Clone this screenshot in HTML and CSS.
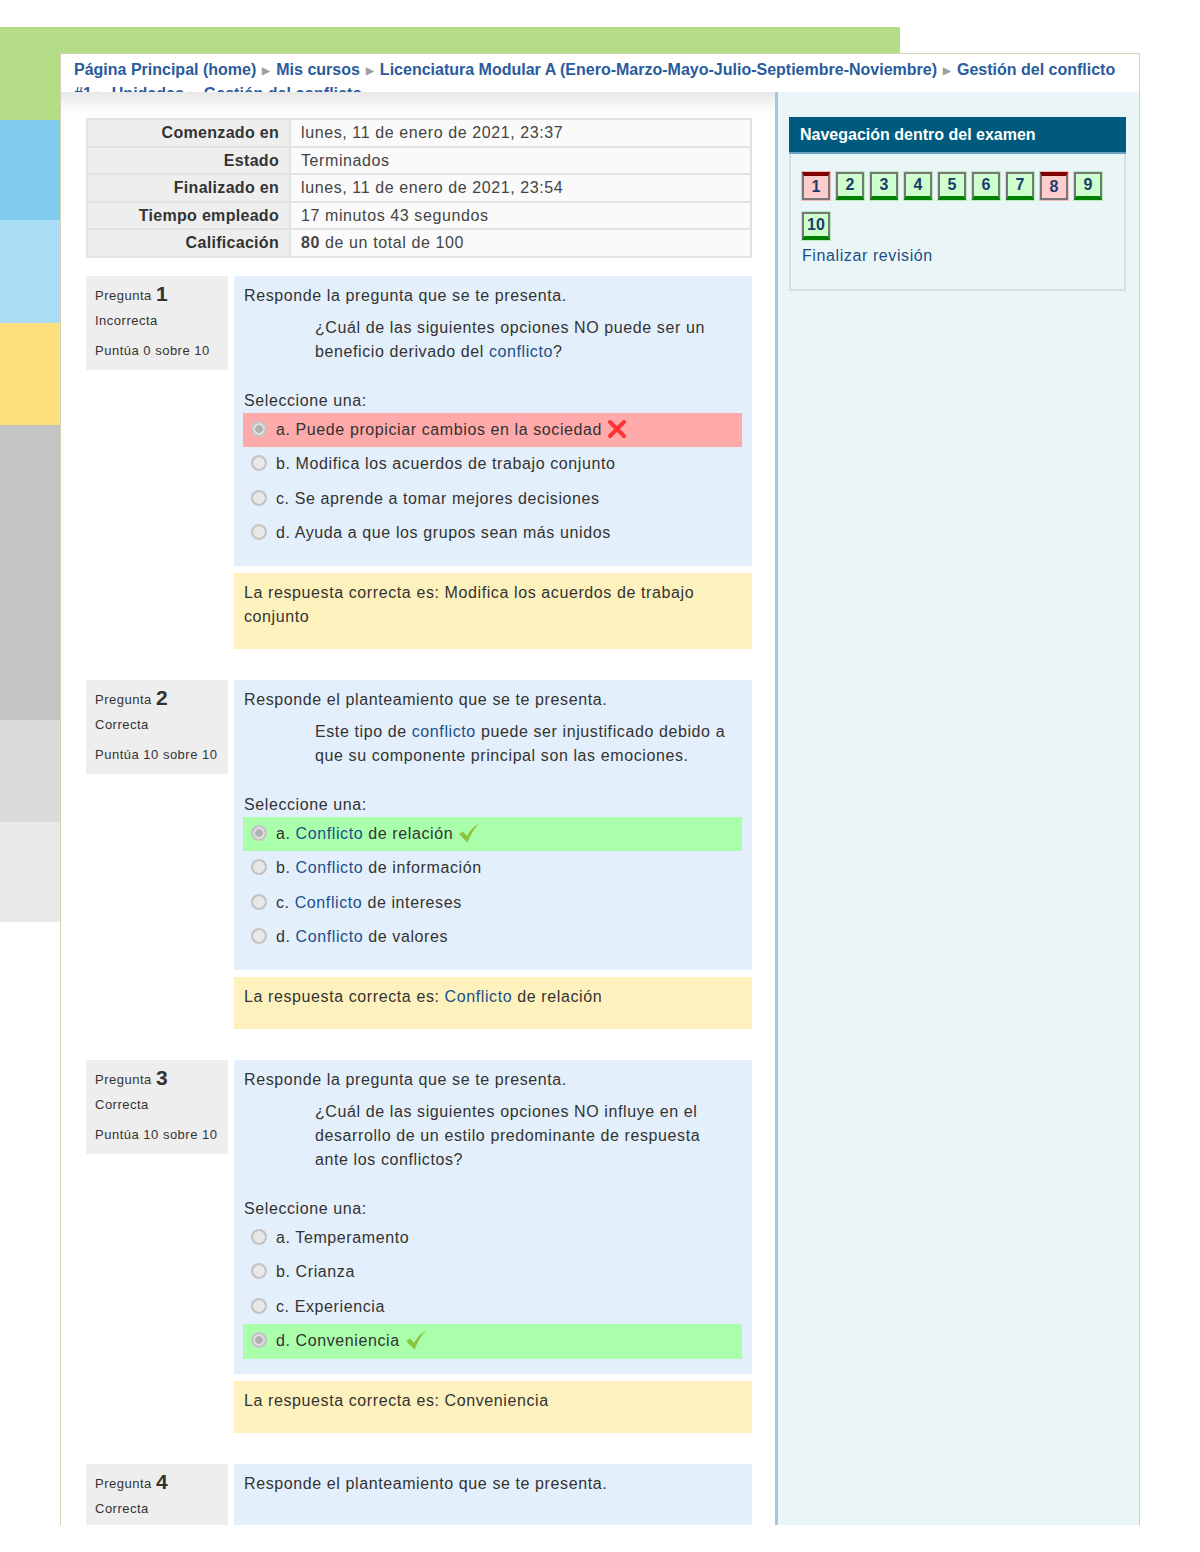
FILE: index.html
```html
<!DOCTYPE html>
<html lang="es">
<head>
  <meta charset="UTF-8">
  <meta name="viewport" content="width=device-width, initial-scale=1.0">
  <title>Revisión del intento</title>
  <link rel="stylesheet" href="styles.css">
</head>
<body>
  <div class="frame">
    <div class="navbar">
      <a>Página Principal (home)</a><span class="sep">▶</span><a>Mis cursos</a><span class="sep">▶</span><a>Licenciatura Modular A (Enero-Marzo-Mayo-Julio-Septiembre-Noviembre)</a><span class="sep">▶</span><a>Gestión del conflicto #1</a><span class="sep">▶</span><a>Unidades</a><span class="sep">▶</span><a>Gestión del conflicto</a>
    </div>
    <div class="layout">
      <div class="region-main">
        <table class="summary">
          <tr><th>Comenzado en</th><td>lunes, 11 de enero de 2021, 23:37</td></tr>
          <tr><th>Estado</th><td>Terminados</td></tr>
          <tr><th>Finalizado en</th><td>lunes, 11 de enero de 2021, 23:54</td></tr>
          <tr><th>Tiempo empleado</th><td>17 minutos 43 segundos</td></tr>
          <tr><th>Calificación</th><td><b>80</b> de un total de 100</td></tr>
        </table>

        <!-- pregunta 1 -->
        <div class="que">
          <div class="info">
            <div class="no">Pregunta <b>1</b></div>
            <div class="state">Incorrecta</div>
            <div class="grade">Puntúa 0 sobre 10</div>
          </div>
          <div class="content">
            <div class="formulation">
              <p>Responde la pregunta que se te presenta.</p>
              <p class="qtext">¿Cuál de las siguientes opciones NO puede ser un beneficio derivado del <a>conflicto</a>?</p>
              <div class="prompt">Seleccione una:</div>
              <div class="opt incorrect"><span class="radio checked"></span>a. Puede propiciar cambios en la sociedad <svg class="mark" width="20" height="20" viewBox="0 0 20 20"><path d="M3 3 L17 17 M17 3 L3 17" stroke="#f33" stroke-width="4" stroke-linecap="round"/></svg></div>
              <div class="opt"><span class="radio"></span>b. Modifica los acuerdos de trabajo conjunto</div>
              <div class="opt"><span class="radio"></span>c. Se aprende a tomar mejores decisiones</div>
              <div class="opt"><span class="radio"></span>d. Ayuda a que los grupos sean más unidos</div>
            </div>
            <div class="outcome">La respuesta correcta es: Modifica los acuerdos de trabajo conjunto</div>
          </div>
        </div>

        <!-- pregunta 2 -->
        <div class="que">
          <div class="info">
            <div class="no">Pregunta <b>2</b></div>
            <div class="state">Correcta</div>
            <div class="grade">Puntúa 10 sobre 10</div>
          </div>
          <div class="content">
            <div class="formulation">
              <p>Responde el planteamiento que se te presenta.</p>
              <p class="qtext">Este tipo de <a>conflicto</a> puede ser injustificado debido a que su componente principal son las emociones.</p>
              <div class="prompt">Seleccione una:</div>
              <div class="opt correct"><span class="radio checked"></span>a. <a>Conflicto</a> de relación <svg class="mark" width="22" height="20" viewBox="0 0 22 20"><path d="M1 11 L5 8.5 L9 13 Q13 5 21 0.5 Q14 8 9.5 19.5 Z" fill="#8dc23d"/></svg></div>
              <div class="opt"><span class="radio"></span>b. <a>Conflicto</a> de información</div>
              <div class="opt"><span class="radio"></span>c. <a>Conflicto</a> de intereses</div>
              <div class="opt"><span class="radio"></span>d. <a>Conflicto</a> de valores</div>
            </div>
            <div class="outcome">La respuesta correcta es: <a>Conflicto</a> de relación</div>
          </div>
        </div>

        <!-- pregunta 3 -->
        <div class="que">
          <div class="info">
            <div class="no">Pregunta <b>3</b></div>
            <div class="state">Correcta</div>
            <div class="grade">Puntúa 10 sobre 10</div>
          </div>
          <div class="content">
            <div class="formulation">
              <p>Responde la pregunta que se te presenta.</p>
              <p class="qtext">¿Cuál de las siguientes opciones NO influye en el desarrollo de un estilo predominante de respuesta ante los conflictos?</p>
              <div class="prompt">Seleccione una:</div>
              <div class="opt"><span class="radio"></span>a. Temperamento</div>
              <div class="opt"><span class="radio"></span>b. Crianza</div>
              <div class="opt"><span class="radio"></span>c. Experiencia</div>
              <div class="opt correct"><span class="radio checked"></span>d. Conveniencia <svg class="mark" width="22" height="20" viewBox="0 0 22 20"><path d="M1 11 L5 8.5 L9 13 Q13 5 21 0.5 Q14 8 9.5 19.5 Z" fill="#8dc23d"/></svg></div>
            </div>
            <div class="outcome">La respuesta correcta es: Conveniencia</div>
          </div>
        </div>

        <!-- pregunta 4 -->
        <div class="que">
          <div class="info">
            <div class="no">Pregunta <b>4</b></div>
            <div class="state">Correcta</div>
            <div class="grade">Puntúa 10 sobre 10</div>
          </div>
          <div class="content">
            <div class="formulation">
              <p>Responde el planteamiento que se te presenta.</p>
              <p class="qtext">&nbsp;</p>
            </div>
          </div>
        </div>
      </div>

      <div class="region-block">
        <div class="block">
          <div class="block-header">Navegación dentro del examen</div>
          <div class="block-content">
            <div class="qn-buttons">
              <span class="qnbutton incorrect">1</span>
              <span class="qnbutton correct">2</span>
              <span class="qnbutton correct">3</span>
              <span class="qnbutton correct">4</span>
              <span class="qnbutton correct">5</span>
              <span class="qnbutton correct">6</span>
              <span class="qnbutton correct">7</span>
              <span class="qnbutton incorrect">8</span>
              <span class="qnbutton correct">9</span>
              <span class="qnbutton correct">10</span>
            </div>
            <a class="endreview">Finalizar revisión</a>
          </div>
        </div>
      </div>
    </div>
  </div>
</body>
</html>
```

FILE: styles.css
```css
body{
  margin: 0;
  font-family: "Liberation Sans", Arial, sans-serif;
  color: #333;
  background:
    linear-gradient(#b5dd88, #b5dd88) 0 27px / 900px 93px no-repeat,
    linear-gradient(#80cdef 0 100px, #a8ddf5 100px 203px, #fde07d 203px 305px, #c4c4c4 305px 600px, #dadada 600px 702px, #e9e9e9 702px 802px) 0 120px / 60px 802px no-repeat,
    #fff;
}
a{
  color: #1b4f8a;
}

/* marco de la pagina */
.frame{
  box-sizing: border-box;
  width: 1080px;
  height: 1472px;
  margin: 53px 0 0 60px;
  border: 1px solid #d3cfb2;
  border-bottom: 0;
  background: #fff;
  overflow: hidden;
}
.navbar{
  box-sizing: border-box;
  height: 38px;
  padding: 4px 13px 0 13px;
  font-size: 16px;
  font-weight: bold;
  line-height: 23px;
  letter-spacing: 0;
  overflow: hidden;
}
.navbar a{
  color: #2a5b9c;
}
.navbar .sep{
  margin: 0 6px;
  font-size: 10px;
  color: #a0a0a0;
  vertical-align: 1px;
}

.layout{
  display: flex;
  height: 1433px;
}
.region-main{
  width: 714px;
  padding: 26px 23px 0 25px;
  box-sizing: border-box;
  background: linear-gradient(#e8e8e8, #fff 22px);
  font-size: 16px;
  letter-spacing: 0.6px;
}
.region-block{
  flex: 1;
  padding: 25px 13px 0 11px;
  border-left: 3px solid #a3c5de;
  background: #eaf5f8;
}

/* resumen */
.summary{
  width: 100%;
  border-collapse: collapse;
  font-size: 16px;
}
.summary th,
.summary td{
  border: 2px solid #e2e2e2;
  padding: 2px 10px;
  line-height: 21.5px;
}
.summary th{
  width: 181px;
  text-align: right;
  background: #eee;
  color: #333;
  letter-spacing: 0.3px;
}
.summary td{
  background: #fafafa;
  color: #444;
}

/* preguntas */
.que{
  display: flex;
  gap: 6px;
  margin-top: 18px;
}
.que + .que{
  margin-top: 31px;
}
.info{
  box-sizing: border-box;
  width: 142px;
  flex-shrink: 0;
  align-self: flex-start;
  padding: 5px 4px 7px 9px;
  background: #eee;
  font-size: 13px;
  letter-spacing: 0.5px;
  color: #333;
}
.info .no{
  line-height: 26px;
}
.info .no b{
  font-size: 21px;
  vertical-align: -1px;
}
.info .state{
  line-height: 24px;
}
.info .grade{
  margin-top: 6px;
  line-height: 24px;
}
.content{
  flex: 1;
}
.formulation{
  padding: 8px 10px 15px 9px;
  background: #e3effa;
  line-height: 24px;
}
.formulation p{
  margin: 0;
  padding-left: 1px;
}
.formulation .qtext{
  width: 415px;
  margin: 8px 0 25px 71px;
}
.prompt{
  padding-left: 1px;
}
.opt{
  padding: 5px 0 5px 8px;
  line-height: 24.5px;
}
.opt.incorrect{
  background: #ffaaaa;
}
.opt.correct{
  background: #aaffaa;
}
.radio{
  display: inline-block;
  width: 16px;
  height: 16px;
  margin-right: 9px;
  vertical-align: -2px;
  border-radius: 50%;
  background: radial-gradient(circle, #e8e8e8 0 5.5px, #c4c4c4 6px);
}
.radio.checked{
  background: radial-gradient(circle, #b0b0b0 0 3.5px, #dedede 4px 5.5px, #c4c4c4 6px);
}
.mark{
  vertical-align: -4px;
}
.outcome{
  margin-top: 7px;
  padding: 8px 10px 20px;
  background: #fdf2bd;
  line-height: 24px;
}

/* bloque de navegacion */
.block-header{
  height: 35px;
  padding-left: 11px;
  border-bottom: 2px solid #6d9fc0;
  background: #005a7d;
  color: #fff;
  font-size: 16px;
  font-weight: bold;
  line-height: 35px;
}
.block-content{
  padding: 18px 11px 21px 11px;
  border: 2px solid #d6dfe2;
  border-top: 0;
  background: #eaf5f8;
}
.qn-buttons{
  display: flex;
  flex-wrap: wrap;
  gap: 12px 6px;
}
.qnbutton{
  box-sizing: border-box;
  display: flex;
  align-items: center;
  justify-content: center;
  width: 28px;
  height: 28px;
  border: 2px solid #777;
  font-size: 16px;
  font-weight: bold;
  color: #1b3b6f;
}
.qnbutton.correct{
  border-bottom: 4px solid #008000;
  background: #ccffcc;
  box-shadow: 0 0 0 1px #b8e8b8;
}
.qnbutton.incorrect{
  border-top: 4px solid #800000;
  background: #ffcccc;
  box-shadow: 0 0 0 1px #f0c0c0;
}
.endreview{
  display: block;
  margin-top: 4px;
  font-size: 16px;
  line-height: 24px;
  letter-spacing: 0.6px;
  color: #1c4f85;
}
```
